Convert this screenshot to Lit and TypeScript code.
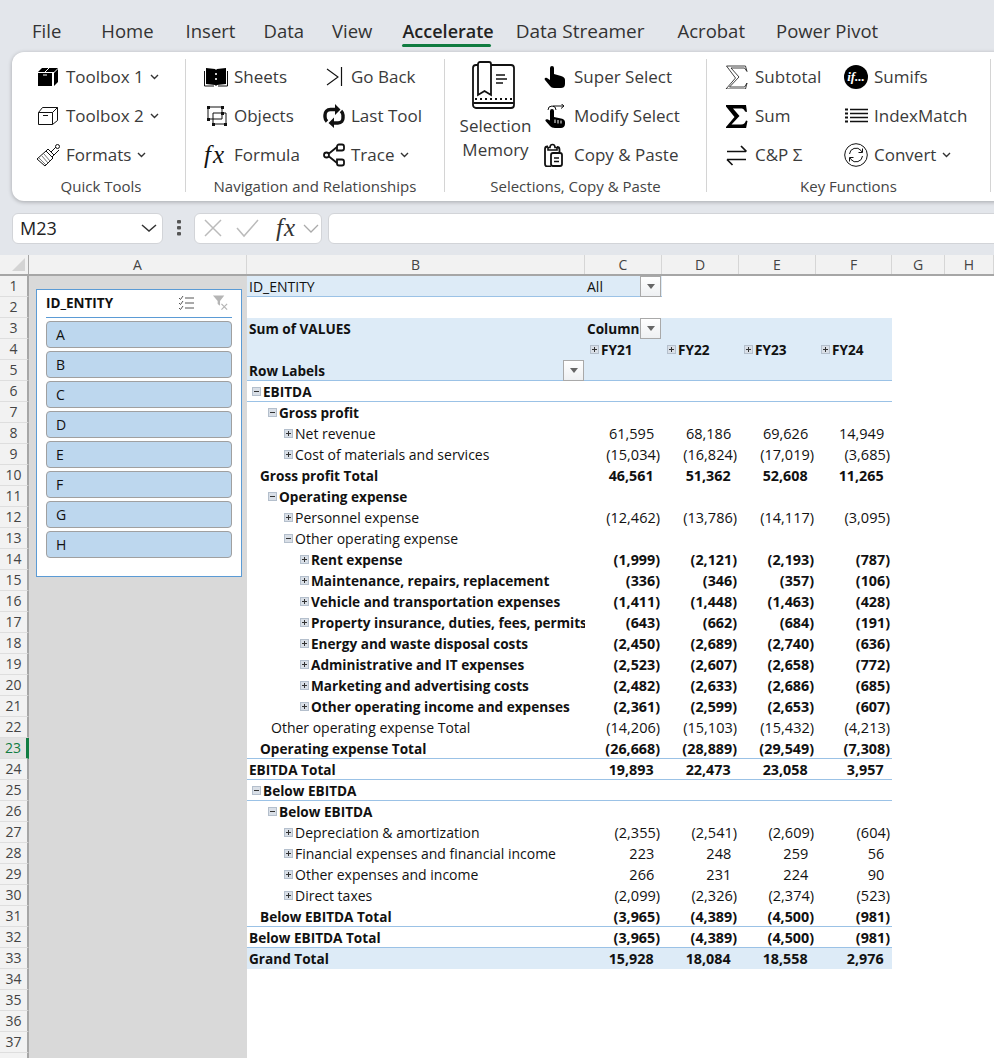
import { LitElement, html, css, svg, nothing } from 'lit';
import { customElement } from 'lit/decorators.js';

type Row = {
  n: number;
  label: string;
  tog?: '+' | '-';
  level?: number;
  total?: 0 | 1 | 2;
  bold?: boolean;
  line?: boolean;
  grand?: boolean;
  vals?: string[];
};

const R = (
  n: number,
  label: string,
  opts: Partial<Row>,
  vals?: string,
): Row => ({ n, label, ...opts, vals: vals ? vals.split(' ') : undefined });

const ROWS: Row[] = [
  R(6, 'EBITDA', { tog: '-', level: 0, bold: true, line: true }),
  R(7, 'Gross profit', { tog: '-', level: 1, bold: true }),
  R(8, 'Net revenue', { tog: '+', level: 2 }, '61,595 68,186 69,626 14,949'),
  R(9, 'Cost of materials and services', { tog: '+', level: 2 }, '(15,034) (16,824) (17,019) (3,685)'),
  R(10, 'Gross profit Total', { total: 1, bold: true }, '46,561 51,362 52,608 11,265'),
  R(11, 'Operating expense', { tog: '-', level: 1, bold: true }),
  R(12, 'Personnel expense', { tog: '+', level: 2 }, '(12,462) (13,786) (14,117) (3,095)'),
  R(13, 'Other operating expense', { tog: '-', level: 2 }),
  R(14, 'Rent expense', { tog: '+', level: 3, bold: true }, '(1,999) (2,121) (2,193) (787)'),
  R(15, 'Maintenance, repairs, replacement', { tog: '+', level: 3, bold: true }, '(336) (346) (357) (106)'),
  R(16, 'Vehicle and transportation expenses', { tog: '+', level: 3, bold: true }, '(1,411) (1,448) (1,463) (428)'),
  R(17, 'Property insurance, duties, fees, permits', { tog: '+', level: 3, bold: true }, '(643) (662) (684) (191)'),
  R(18, 'Energy and waste disposal costs', { tog: '+', level: 3, bold: true }, '(2,450) (2,689) (2,740) (636)'),
  R(19, 'Administrative and IT expenses', { tog: '+', level: 3, bold: true }, '(2,523) (2,607) (2,658) (772)'),
  R(20, 'Marketing and advertising costs', { tog: '+', level: 3, bold: true }, '(2,482) (2,633) (2,686) (685)'),
  R(21, 'Other operating income and expenses', { tog: '+', level: 3, bold: true }, '(2,361) (2,599) (2,653) (607)'),
  R(22, 'Other operating expense Total', { total: 2 }, '(14,206) (15,103) (15,432) (4,213)'),
  R(23, 'Operating expense Total', { total: 1, bold: true, line: true }, '(26,668) (28,889) (29,549) (7,308)'),
  R(24, 'EBITDA Total', { total: 0, bold: true, line: true }, '19,893 22,473 23,058 3,957'),
  R(25, 'Below EBITDA', { tog: '-', level: 0, bold: true, line: true }),
  R(26, 'Below EBITDA', { tog: '-', level: 1, bold: true }),
  R(27, 'Depreciation & amortization', { tog: '+', level: 2 }, '(2,355) (2,541) (2,609) (604)'),
  R(28, 'Financial expenses and financial income', { tog: '+', level: 2 }, '223 248 259 56'),
  R(29, 'Other expenses and income', { tog: '+', level: 2 }, '266 231 224 90'),
  R(30, 'Direct taxes', { tog: '+', level: 2 }, '(2,099) (2,326) (2,374) (523)'),
  R(31, 'Below EBITDA Total', { total: 1, bold: true, line: true }, '(3,965) (4,389) (4,500) (981)'),
  R(32, 'Below EBITDA Total', { total: 0, bold: true, line: true }, '(3,965) (4,389) (4,500) (981)'),
  R(33, 'Grand Total', { total: 0, bold: true, grand: true }, '15,928 18,084 18,558 2,976'),
];

const icon = (body: unknown, w = 24, h = 24) =>
  html`<svg width=${w} height=${h} viewBox="0 0 ${w} ${h}" fill="none" stroke="#111">${body}</svg>`;

const chev = html`<svg class="chev" width="9" height="6" viewBox="0 0 9 6" fill="none" stroke="#333" stroke-width="1.4"><path d="M1 1l3.500 3.500L8 1" /></svg>`;

const ICONS: Record<string, unknown> = {
  box1: icon(svg`
    <path d="M2 8h14v13H2z" fill="#000" stroke="none" />
    <path d="M2 7l4-4h16l-4 4z" fill="#000" stroke="none" />
    <path d="M9 7l4-4" stroke="#fff" />
    <path d="M18 8l4-4v13l-4 4z" fill="#000" stroke="none" />
    <path d="M7 10h4" stroke="#fff" />`),
  box2: icon(svg`
    <path d="M2.5 8.5h14v12h-14zM2.5 8.5l4-5h15l-5 5M16.5 20.5l5-4v-13" stroke-width="1" />
    <path d="M7 11.5h5" />`),
  brush: icon(svg`
    <path d="M1 16l9-8 7 7-8 8zM10 8l2-2 6 6-2 2M15 9l5-5M18 12l5-5" stroke-width="1" />
    <circle cx="21.500" cy="3.500" r="2" stroke-width="1" />
    <path d="M3 15l7 7M6 13l6 7M8 11l6 7" stroke-width=".8" stroke="#555" />`),
  sheets: icon(svg`
    <path d="M2 3l9 1 1 1 1-1 9-1v16l-9 1-1 1-1-1-9-1z" fill="#000" stroke="none" />
    <path d="M.5 6v15H10M23.5 6v15H14" stroke-width="1" />
    <path d="M12 8v2M12 13v2" stroke="#fff" stroke-width="1.6" />`),
  goback: icon(svg`
    <path d="M5 4l11 8-11 8" stroke-width="1.1" />
    <path d="M19.5 2v19" stroke-width="1.2" />`),
  objects: icon(svg`
    <path d="M4 3h14v12H4zM9 9h13v11H9z" stroke-width="1" />
    <g fill="#111" stroke="none"><rect x="3" y="2" width="3" height="3" /><rect x="17" y="2" width="3" height="3" /><rect x="3" y="14" width="3" height="3" /><rect x="17" y="8" width="3" height="3" /><rect x="8" y="19" width="3" height="3" /><rect x="20" y="19" width="3" height="3" /></g>`),
  fx: html`<span class="fx">fx</span>`,
  cycle: icon(svg`
    <path d="M13 5.500H8.500C5 5.500 3 8 3 11v2c0 2 1 3.500 2 4.500M12 19h4c3.500 0 5-2.500 5-5v-3c0-2-1-3-2-4" stroke-width="3.4" />
    <path d="M13 0l5.500 5.500L13 11zM12 13.500L6.500 19l5.500 5z" fill="#111" stroke="none" />`),
  trace: icon(svg`
    <circle cx="4.500" cy="12" r="2.500" stroke-width="1.800" />
    <path d="M7 10.500L15 4M7 13.500l8 6.500" stroke-width="1.800" />
    <path d="M15 3.500a2 2 0 012-2h3a2 2 0 012 2v2a2 2 0 01-2 2h-5zM15 20.500a2 2 0 002 2h3a2 2 0 002-2v-2a2 2 0 00-2-2h-5z" stroke-width="1.800" />`),
  hand: icon(svg`
    <path d="M9 3a2 2 0 014 0v6l7 2c3 1 4 2 4 4v4c0 3-2 4-4 4h-7c-2 0-3-1-4-2l-5-6c-1-1.500 0-3 2-2l3 2z" fill="#000" stroke="none" />`),
  modify: icon(svg`
    <path d="M9 7a2 2 0 014 0v6l7 1.500c3 .5 4 2 4 4V20c0 2.500-2 4-4 4h-6c-2 0-4-1-5-2l-4-4.500c-1.500-1.500 0-3 2-2l2 1z" fill="#000" stroke="none" />
    <path d="M14 15.500v3.500M17 16v3.500M20 16.500v3" stroke="#fff" />
    <path d="M7 6a4 4 0 018 0M12 2h11M20 -.5l3 2.500-3 2.500" stroke-width="1" />`),
  clip: icon(svg`
    <path d="M7 3.500H6.500C5 3.500 4 4.500 4 6v15c0 1.500 1 2.500 2.500 2.500H10" stroke-width="1.800" />
    <path d="M7 4.500h2c0-4 5-4 5 0h2V7H7z" stroke-width="1.600" />
    <path d="M16 4c1.500 0 2.500 1 2.500 2.500V9" stroke-width="1.800" />
    <rect x="10" y="10" width="11" height="13" rx="2" stroke-width="1.800" />
    <path d="M13 15h5M13 18.500h5" stroke-width="1.500" />`),
  sigmaO: icon(svg`
    <path d="M1.500 1h19l1.500 5.500-2.500-3.500H6l8 9-9.500 10h15l2.500-4-1.500 6H1L10.500 13z" stroke-width=".8" />`),
  sigmaB: icon(svg`
    <path d="M1 1h20l1 7-2-.5C19 5 18 4.500 15 4.500H8l6.500 7.500-8 8.500H16c3 0 4-1.500 5-4l1.500.5-1.500 7.500H1v-1.500L9.500 13 1 2.500z" fill="#000" stroke="none" />`),
  swap: icon(svg`
    <path d="M2 8.500h19M16 3l5.500 5.500M2 16.500h19M7.500 22L2 16.500" stroke-width="1.700" />`),
  ifs: icon(svg`
    <circle cx="12" cy="12" r="12" fill="#000" stroke="none" />
    <text x="12" y="16" text-anchor="middle" fill="#fff" stroke="none" font-family="Liberation Serif" font-style="italic" font-weight="700" font-size="13">if...</text>`),
  list: icon(svg`
    <path d="M6 5.500h18M6 9.500h18M6 13.500h18M6 17.500h18" stroke-width="1.500" />
    <g fill="#111" stroke="none"><rect x="1" y="4.500" width="3" height="2" /><rect x="1" y="8.500" width="3" height="2" /><rect x="1" y="12.500" width="3" height="2" /><rect x="1" y="16.500" width="3" height="2" /></g>`),
  convert: icon(svg`
    <circle cx="12" cy="12" r="11.300" stroke-width="1" />
    <path d="M5.500 11a6.500 6.500 0 0111.500-3.500l1 1.500M18.500 13A6.500 6.500 0 017 16.500L6 15M18.500 5.500V9.500h-4M5.500 18.500V14.500h4" stroke-width="1" />`),
};

const book = html`<svg width="46" height="50" viewBox="0 0 46 50" fill="none" stroke="#111" stroke-width="1.800">
  <path d="M20 4h20a3 3 0 013 3v37a3 3 0 01-3 3H5a3 3 0 01-3-3V7a3 3 0 013-3h2" />
  <path d="M7 34V3a2 2 0 012-2h9a2 2 0 012 2v31l-6.500-4z" />
  <path d="M2.500 42h40" />
  <path d="M4 38h38" stroke-width="2" stroke-dasharray="2 3" />
  <path d="M25 14h9M25 18h11M25 22h7" stroke-width="1.500" />
</svg>`;

const item = (ic: string, label: string, more = false) => html`
  <div class="item">
    <span class="ic">${ICONS[ic]}</span><span>${label}</span>${more ? chev : nothing}
  </div>
`;

@customElement('app-root')
export class AppRoot extends LitElement {
  static styles = css`
    :host {
      display: block;
      position: relative;
      width: 994px;
      height: 1058px;
      overflow: hidden;
      background: #e3e6eb;
      font-family: 'Open Sans', sans-serif;
      color: #333;
    }

    /* tabs */
    .tabs {
      display: flex;
      height: 52px;
      padding: 19px 0 0 32px;
      box-sizing: border-box;
      font-size: 18.5px;
      line-height: 24px;
      color: #333;
    }
    .tabs span { margin-right: 30px; white-space: nowrap; }
    .tabs .file { margin-right: 40px; }
    .tabs .home { margin-right: 32px; }
    .tabs .insert, .tabs .data { margin-right: 28px; }
    .tabs .stream { font-size: 19px; margin-right: 33px; }
    .tabs .acro { margin-right: 31px; }
    .tabs .on {
      position: relative;
      font-size: 18px;
      font-weight: 600;
      color: #222;
      margin-right: 22px;
    }
    .tabs .on::after {
      content: '';
      position: absolute;
      left: 0;
      right: 3px;
      top: 25px;
      height: 3px;
      border-radius: 2px;
      background: #107c41;
    }

    /* ribbon */
    .ribbon {
      display: flex;
      width: 1000px;
      height: 149px;
      margin-left: 12px;
      background: #fff;
      border-radius: 12px 0 0 12px;
      box-shadow: 0 1px 4px rgba(0, 0, 0, 0.28);
      font-size: 17px;
      color: #3a3a3a;
    }
    .group { display: flex; flex-direction: column; padding-top: 5px; box-sizing: border-box; flex: none; }
    .g1 { width: 173px; }
    .g2 { width: 258px; }
    .g3 { width: 261px; }
    .g4 { width: 283px; }
    .sep { flex: none; width: 1px; margin: 7px 0 9px; background: #d4d4d4; }
    .cols { display: flex; height: 117px; }
    .g1 .cols { padding-left: 24px; }
    .g2 .cols { padding-left: 18px; }
    .g3 .cols { padding-left: 15px; }
    .g4 .cols { padding-left: 18px; }
    .c118 { width: 118px; }
    .c119 { width: 119px; }
    .col { display: flex; flex-direction: column; }
    .item { display: flex; align-items: center; height: 39px; white-space: nowrap; }
    .ic { display: flex; align-items: center; flex: none; width: 30px; }
    .g3 .ic { width: 33px; }
    .g2 .col + .col .ic { width: 29px; }
    .chev { margin-left: 6px; }
    .fx {
      font: italic 25px/24px 'Liberation Serif', serif;
      letter-spacing: 2px;
      color: #111;
    }
    .big {
      display: flex;
      flex-direction: column;
      align-items: center;
      width: 71px;
      margin-right: 10px;
      padding-top: 4px;
      line-height: 24px;
      text-align: center;
    }
    .big svg { margin: 0 4px 3px 0; }
    .glabel {
      height: 24px;
      line-height: 24px;
      text-align: center;
      font-size: 15px;
      color: #444;
    }
    .g1 .glabel { padding-left: 5px; }

    /* formula bar */
    .fbar { display: flex; align-items: center; height: 54px; padding-left: 12px; }
    .fbox {
      display: flex;
      align-items: center;
      height: 31px;
      box-sizing: border-box;
      background: #fff;
      border: 1px solid #d2d4d8;
      border-radius: 6px;
      flex: none;
    }
    .name { width: 151px; padding: 0 4px 0 7px; justify-content: space-between; font-size: 18px; color: #222; }
    .dots { width: 31px; display: flex; justify-content: center; flex: none; }
    .tools { width: 128px; padding-left: 8px; }
    .tools .ok { margin-left: 10px; }
    .tools .fx { color: #333; margin: 0 7px 0 15px; letter-spacing: 1px; }
    .input { width: 700px; margin-left: 6px; }

    /* sheet */
    .heads, .row {
      display: grid;
      grid-template-columns: 29px 218px 338px 77px 77px 77px 76px 53px 49px;
    }
    .heads { height: 21px; box-sizing: border-box; background: #f2f2f2; border-bottom: 2px solid #a6a6a6; }
    .heads > div {
      display: flex;
      align-items: center;
      justify-content: center;
      font-size: 14px;
      color: #444;
      border-right: 1px solid #d6d6d6;
    }
    .heads .corner { align-items: flex-end; justify-content: flex-end; padding: 0 3px 3px 0; border-right: 1px solid #a6a6a6; }
    .sheet { position: relative; background: #fff; height: 803px; overflow: hidden; }
    .row {
      height: 21px;
      font-size: 14px;
      line-height: 21px;
      color: #111;
      white-space: nowrap;
    }
    .num {
      background: #f2f2f2;
      border-right: 2px solid #a6a6a6;
      border-bottom: 1px solid #dedede;
      box-sizing: border-box;
      text-align: center;
      font-size: 14px;
      line-height: 20px;
      color: #444;
    }
    .num.sel { background: #e2e2e2; color: #107c41; border-right: 3px solid #107c41; }
    .gray { background: #d9d9d9; }
    .cell { box-sizing: border-box; height: 21px; overflow: hidden; padding-left: 2px; display: flex; align-items: center; }
    .cell.v { justify-content: flex-end; padding: 0 2px 0 0; font-size: 14.5px; }
    .cell.v.b { font-size: 14.3px; }
    .cell.v i { visibility: hidden; font-style: normal; padding-left: 1.5px; }
    .cell.lead { justify-content: space-between; padding-right: 1px; }
    .cell.lead .drop { margin-left: auto; }
    .cell.fy { padding-left: 5px; font-weight: 700; font-size: 13.6px; }
    .b { font-weight: 700; font-size: 13.6px; }
    .fill { background: #ddebf7; }
    .line { box-shadow: inset 0 -1px 0 #9bc2e6; }
    .tog {
      position: relative;
      flex: none;
      width: 9px;
      height: 9px;
      margin-right: 2px;
      box-sizing: border-box;
      background: #d9dfe7;
      border: 1px solid #b4bfcc;
    }
    .tog::before {
      content: '';
      position: absolute;
      left: 1px;
      top: 3px;
      width: 5px;
      height: 1px;
      background: #333;
    }
    .tog.plus::after {
      content: '';
      position: absolute;
      left: 3px;
      top: 1px;
      width: 1px;
      height: 5px;
      background: #333;
    }
    .drop {
      display: flex;
      align-items: center;
      justify-content: center;
      flex: none;
      width: 21px;
      height: 21px;
      box-sizing: border-box;
      border: 1px solid #a9a9a9;
      background: linear-gradient(#fff, #eef0f2);
    }
    .drop::before {
      content: '';
      border: 4px solid transparent;
      border-top: 5px solid #666;
      border-bottom: 0;
    }

    /* slicer floats over the sheet */
    .slicer {
      position: absolute;
      left: 36px;
      top: 13px;
      width: 206px;
      height: 288px;
      box-sizing: border-box;
      padding: 0 9px;
      background: #fff;
      border: 1px solid #5b9bd5;
    }
    .s-head {
      display: flex;
      align-items: center;
      height: 28px;
      padding: 0 3px 2px 0;
      box-sizing: border-box;
      border-bottom: 1px solid #5b9bd5;
      font-size: 13.5px;
      font-weight: 700;
      color: #111;
      gap: 17px;
    }
    .s-head b { flex: 1; font-weight: 700; }
    .s-btns { display: flex; flex-direction: column; gap: 3px; padding-top: 3px; }
    .s-btn {
      height: 27px;
      box-sizing: border-box;
      padding-left: 9px;
      line-height: 26px;
      font-size: 14px;
      color: #111;
      background: #bdd7ee;
      border: 1px solid #a0a0a0;
      border-radius: 4px;
    }
  `;

  private cols = ['B', 'C', 'D', 'E', 'F', 'G', 'H'];

  private renderVal(v?: string, bold?: boolean) {
    if (!v) return html`<div class="cell"></div>`;
    const neg = v.startsWith('(');
    return html`<div class="cell v ${bold ? 'b' : ''}">${v}${neg ? nothing : html`<i>)</i>`}</div>`;
  }

  // Row 1 to 5 are the pivot filter and header block, they don't follow the data shape
  private renderHeadRows() {
    const fy = (t: string) =>
      html`<div class="cell fill fy"><span class="tog plus"></span>${t}</div>`;
    return html`
      <div class="row">
        ${this.num(1)}<div class="gray"></div>
        <div class="cell fill line">ID_ENTITY</div>
        <div class="cell fill line lead"><span>All</span><span class="drop"></span></div>
      </div>
      <div class="row">${this.num(2)}<div class="gray"></div></div>
      <div class="row">
        ${this.num(3)}<div class="gray"></div>
        <div class="cell fill b">Sum of VALUES</div>
        <div class="cell fill b lead"><span>Column</span><span class="drop"></span></div>
        <div class="fill"></div><div class="fill"></div><div class="fill"></div>
      </div>
      <div class="row">
        ${this.num(4)}<div class="gray"></div>
        <div class="fill"></div>
        ${fy('FY21')}${fy('FY22')}${fy('FY23')}${fy('FY24')}
      </div>
      <div class="row">
        ${this.num(5)}<div class="gray"></div>
        <div class="cell fill line b lead"><span>Row Labels</span><span class="drop"></span></div>
        <div class="fill line"></div><div class="fill line"></div><div class="fill line"></div><div class="fill line"></div>
      </div>
    `;
  }

  private num(n: number | string) {
    return html`<div class="num ${n === 23 ? 'sel' : ''}">${n}</div>`;
  }

  private renderRow(r: Row) {
    const pad = r.tog ? 5 + (r.level ?? 0) * 16 : 2 + (r.total ?? 0) * 11;
    const cls = `${r.line ? 'line' : ''} ${r.grand ? 'fill' : ''}`;
    const vals = r.vals ?? [];
    return html`
      <div class="row">
        ${this.num(r.n)}<div class="gray"></div>
        <div class="cell ${cls} ${r.bold ? 'b' : ''}" style="padding-left:${pad}px">
          ${r.tog ? html`<span class="tog ${r.tog === '+' ? 'plus' : ''}"></span>` : nothing}${r.label}
        </div>
        ${[0, 1, 2, 3].map(
          (i) => html`<div class="${cls}">${this.renderVal(vals[i], r.bold)}</div>`,
        )}
      </div>
    `;
  }

  render() {
    return html`
      <div class="tabs">
        <span class="file">File</span><span class="home">Home</span><span class="insert">Insert</span><span class="data">Data</span><span>View</span>
        <span class="on">Accelerate</span><span class="stream">Data Streamer</span><span class="acro">Acrobat</span><span>Power Pivot</span>
      </div>

      <div class="ribbon">
        <div class="group g1">
          <div class="cols">
            <div class="col">
              ${item('box1', 'Toolbox 1', true)}${item('box2', 'Toolbox 2', true)}${item('brush', 'Formats', true)}
            </div>
          </div>
          <div class="glabel">Quick Tools</div>
        </div>
        <div class="sep"></div>
        <div class="group g2">
          <div class="cols">
            <div class="col c118">
              ${item('sheets', 'Sheets')}${item('objects', 'Objects')}${item('fx', 'Formula')}
            </div>
            <div class="col">
              ${item('goback', 'Go Back')}${item('cycle', 'Last Tool')}${item('trace', 'Trace', true)}
            </div>
          </div>
          <div class="glabel">Navigation and Relationships</div>
        </div>
        <div class="sep"></div>
        <div class="group g3">
          <div class="cols">
            <div class="big">${book}<span>Selection</span><span>Memory</span></div>
            <div class="col">
              ${item('hand', 'Super Select')}${item('modify', 'Modify Select')}${item('clip', 'Copy & Paste')}
            </div>
          </div>
          <div class="glabel">Selections, Copy &amp; Paste</div>
        </div>
        <div class="sep"></div>
        <div class="group g4">
          <div class="cols">
            <div class="col c119">
              ${item('sigmaO', 'Subtotal')}${item('sigmaB', 'Sum')}${item('swap', 'C&P Σ')}
            </div>
            <div class="col">
              ${item('ifs', 'Sumifs')}${item('list', 'IndexMatch')}${item('convert', 'Convert', true)}
            </div>
          </div>
          <div class="glabel">Key Functions</div>
        </div>
        <div class="sep"></div>
      </div>

      <div class="fbar">
        <div class="fbox name">
          <span>M23</span>
          <svg width="18" height="10" viewBox="0 0 18 10" fill="none" stroke="#333" stroke-width="1.500"><path d="M2 2l7 6 7-6" /></svg>
        </div>
        <div class="dots">
          <svg width="4" height="16" viewBox="0 0 4 16" fill="#555"><rect x="0" y="0" width="4" height="3.500" rx="1" /><rect x="0" y="6" width="4" height="3.500" rx="1" /><rect x="0" y="12" width="4" height="3.500" rx="1" /></svg>
        </div>
        <div class="fbox tools">
          <svg width="20" height="20" viewBox="0 0 20 20" stroke="#bbb" stroke-width="1.500"><path d="M2 2l16 16M18 2L2 18" /></svg>
          <svg class="ok" width="28" height="20" viewBox="0 0 28 20" fill="none" stroke="#bbb" stroke-width="1.500"><path d="M4 10l7 8L25 2" /></svg>
          <span class="fx">fx</span>
          <svg width="16" height="9" viewBox="0 0 16 9" fill="none" stroke="#aaa" stroke-width="1.300"><path d="M1 1l7 7 7-7" /></svg>
        </div>
        <div class="fbox input"></div>
      </div>

      <div class="heads">
        <div class="corner">
          <svg width="13" height="13" viewBox="0 0 13 13"><path d="M13 0v13H0z" fill="#d4d4d4" /></svg>
        </div>
        <div>A</div>
        ${this.cols.map((c) => html`<div>${c}</div>`)}
      </div>

      <div class="sheet">
        ${this.renderHeadRows()}
        ${ROWS.map((r) => this.renderRow(r))}
        ${[34, 35, 36, 37, ''].map(
          (n) => html`<div class="row">${this.num(n)}<div class="gray"></div></div>`,
        )}

        <div class="slicer">
          <div class="s-head">
            <b>ID_ENTITY</b>
            <svg width="17" height="16" viewBox="0 0 17 16" fill="none" stroke="#555"><path d="M1 3l1.500 1.500L5 1M1 8l1.500 1.500L5 6M1 13l1.500 1.500L5 11M7 3h9M7 8h9M7 13h9" /></svg>
            <svg width="17" height="17" viewBox="0 0 18 17" fill="none"><path d="M1 1h12L8.500 7v5L6 10V7z" fill="#b5b5b5" /><path d="M10 10l6 6M16 10l-6 6" stroke="#b5b5b5" stroke-width="1.300" /></svg>
          </div>
          <div class="s-btns">
            ${['A', 'B', 'C', 'D', 'E', 'F', 'G', 'H'].map((s) => html`<div class="s-btn">${s}</div>`)}
          </div>
        </div>
      </div>
    `;
  }
}
